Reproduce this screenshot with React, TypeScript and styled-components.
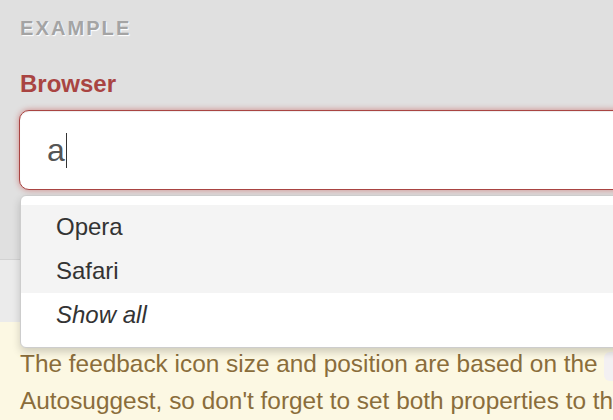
import React from "react";
import styled, { createGlobalStyle } from "styled-components";

const GlobalStyle = createGlobalStyle`
  html, body {
    margin: 0;
    padding: 0;
    overflow: hidden;
    background: #fcf8e3;
  }
  body {
    font-family: "Liberation Sans", Arial, Helvetica, sans-serif;
  }
`;

const Page = styled.div`
  width: 1000px;
  display: flex;
  flex-direction: column;
`;

const ExamplePanel = styled.section`
  position: relative;
  background: #e0e0e0;
  padding: 18px 0 0 19px;
  height: 260px;
  box-sizing: border-box;
  border-bottom: 1px solid #d2d2d2;
`;

const Heading = styled.div`
  font-size: 20px;
  line-height: 20px;
  font-weight: bold;
  letter-spacing: 2.1px;
  color: #a4a4a4;
  text-shadow: 1px 1px 1px #fff;
  padding-left: 1px;
`;

const Label = styled.label`
  display: block;
  margin-top: 29px;
  padding-left: 1px;
  font-size: 24px;
  line-height: 34px;
  font-weight: bold;
  color: #a94442;
`;

const Field = styled.div`
  position: relative;
  margin-top: 9px;
`;

const Input = styled.div`
  display: flex;
  align-items: center;
  box-sizing: border-box;
  height: 80px;
  width: 900px;
  padding: 0 27px;
  background: #fff;
  border: 1px solid #a94442;
  border-radius: 10px;
  box-shadow: inset 0 1px 1px rgba(0, 0, 0, 0.075), 0 0 6px #ce8483;
  font-size: 32px;
  line-height: 32px;
  color: #555;
`;

const Caret = styled.span`
  display: inline-block;
  width: 1px;
  height: 35px;
  margin-left: 1px;
  background: #333;
`;

const Menu = styled.ul`
  position: absolute;
  top: 85px;
  left: 1px;
  width: 880px;
  margin: 0;
  padding: 9px 0 10px;
  list-style: none;
  background: #fff;
  border: 1px solid #cdcdcd;
  border-radius: 6px;
  box-shadow: 0 4px 8px rgba(0, 0, 0, 0.18);
  z-index: 2;
`;

const Item = styled.li<{ $highlight?: boolean; $italic?: boolean }>`
  padding: 5px 35px;
  font-size: 24px;
  line-height: 34px;
  color: #333;
  background: ${(p) => (p.$highlight ? "#f4f4f4" : "#fff")};
  font-style: ${(p) => (p.$italic ? "italic" : "normal")};
`;

const Band = styled.div`
  background: #ebebeb;
  height: 62px;
`;

const Alert = styled.div`
  background: #fcf8e3;
  color: #8a6d3b;
  padding: 25px 20px;
  font-size: 24.4px;
  line-height: 34px;
  white-space: nowrap;
`;

const Code = styled.code`
  font-family: "Liberation Mono", monospace;
  font-size: 21px;
  padding: 3px 12px;
  border-radius: 6px;
  background: #f3f0f2;
  color: #c7254e;
`;

export default function App() {
  return (
    <>
      <GlobalStyle />
      <Page>
        <ExamplePanel>
          <Heading>EXAMPLE</Heading>
          <Label>Browser</Label>
          <Field>
            <Input role="textbox">
              a<Caret />
            </Input>
            <Menu>
              <Item $highlight>Opera</Item>
              <Item $highlight>Safari</Item>
              <Item $italic>Show all</Item>
            </Menu>
          </Field>
        </ExamplePanel>
        <Band />
        <Alert>
          The feedback icon size and position are based on the <Code>font-size</Code> of the
          <br />
          Autosuggest, so don't forget to set both properties to the same value.
        </Alert>
      </Page>
    </>
  );
}
